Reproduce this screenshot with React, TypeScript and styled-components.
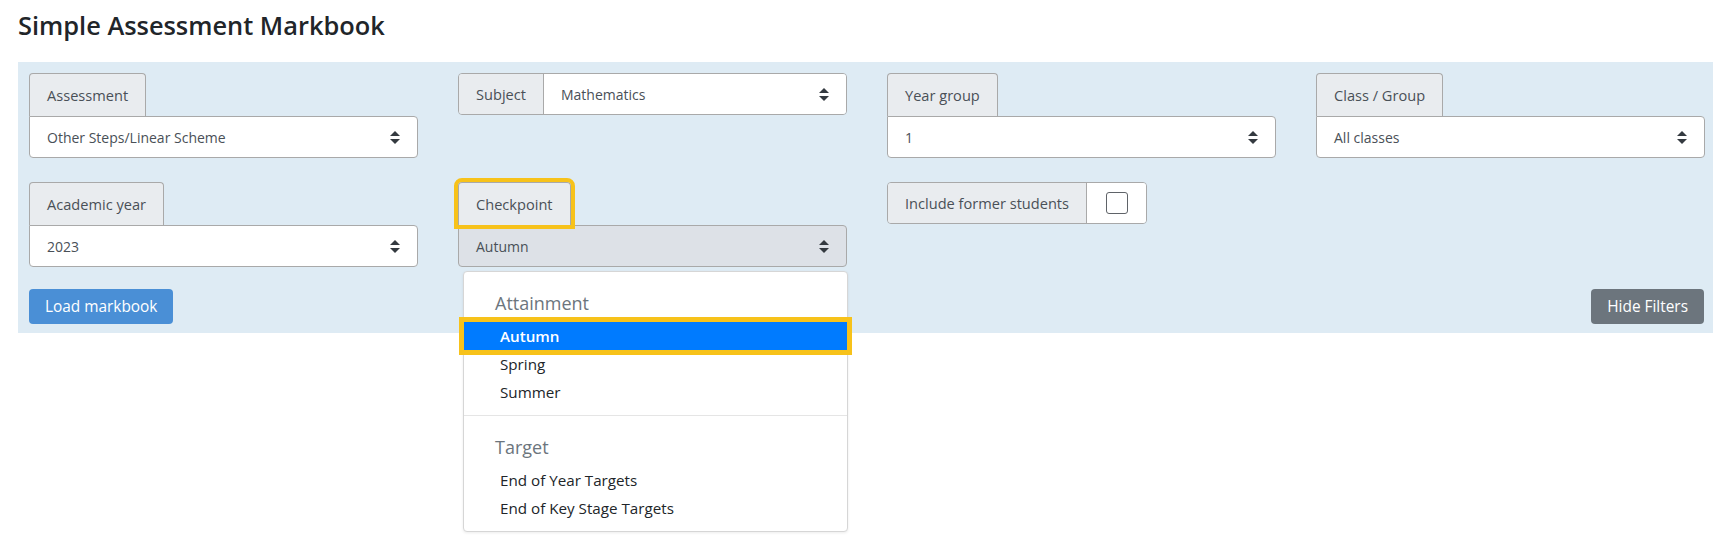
import * as React from "react";
import styled, { createGlobalStyle } from "styled-components";

const GlobalStyle = createGlobalStyle`
  html, body {
    margin: 0;
    padding: 0;
    background: #fff;
    font-family: "Open Sans", "Noto Sans", Arial, sans-serif;
    color: #212529;
  }
`;

const Page = styled.div`
  padding: 4px 23px 0 18px;
  width: 1736px;
  min-height: 551px;
  box-sizing: border-box;
`;

const Title = styled.h1`
  margin: 0 0 16px 0;
  font-size: 25.4px;
  font-weight: 600;
  line-height: 42px;
  color: #212529;
`;

const Panel = styled.div`
  background: #deebf4;
  padding: 11px 9px 9px 11px;
`;

const Grid = styled.div`
  display: grid;
  grid-template-columns: repeat(4, 389px);
  column-gap: 40px;
  row-gap: 24px;
`;

const Field = styled.div`
  position: relative;
  display: flex;
  flex-direction: column;
  align-items: flex-start;
`;

const Label = styled.div<{ $highlight?: boolean }>`
  position: relative;
  z-index: ${(p) => (p.$highlight ? 2 : "auto")};
  display: flex;
  align-items: center;
  height: 43px;
  padding: 0 17px;
  box-sizing: border-box;
  background: #e9ecef;
  border: 1px solid #a9a9a9;
  border-bottom: none;
  border-radius: 4px 4px 0 0;
  font-size: 14.6px;
  color: #495057;
  outline: ${(p) => (p.$highlight ? "4px solid #f7c21a" : "none")};
`;

const Select = styled.div<{ $active?: boolean }>`
  display: flex;
  align-items: center;
  justify-content: space-between;
  width: 100%;
  height: 42px;
  padding: 0 17px 0 17px;
  box-sizing: border-box;
  background: ${(p) => (p.$active ? "#dde1e7" : "#fff")};
  border: 1px solid #a9a9a9;
  border-radius: 0 4px 4px 4px;
  font-size: 14px;
  color: #495057;
`;

const InlineGroup = styled.div`
  display: flex;
  width: 100%;
  height: 42px;
  box-sizing: border-box;
  border: 1px solid #a9a9a9;
  border-radius: 4px;
  overflow: hidden;
  font-size: 14.6px;
  color: #495057;
`;

const InlineLabel = styled.div`
  display: flex;
  align-items: center;
  padding: 0 17px;
  background: #e9ecef;
  border-right: 1px solid #a9a9a9;
`;

const InlineSelect = styled.div`
  flex: 1;
  display: flex;
  align-items: center;
  justify-content: space-between;
  padding: 0 17px 0 17px;
  font-size: 14px;
  background: #fff;
`;

const CheckGroup = styled(InlineGroup)`
  width: auto;
`;

const CheckCell = styled.div`
  width: 59px;
  display: flex;
  align-items: center;
  justify-content: center;
  background: #fff;
`;

const CheckBox = styled.span`
  width: 20px;
  height: 20px;
  border: 1.5px solid #5f6368;
  border-radius: 3px;
  background: #fff;
`;

const Menu = styled.div`
  position: absolute;
  top: 89px;
  left: 5px;
  right: -1px;
  z-index: 5;
  background: #fff;
  border: 1px solid #d6d6d6;
  border-radius: 4px;
  box-shadow: 0 1px 3px rgba(0, 0, 0, 0.08);
  padding: 13px 0 9px;
  font-size: 15.2px;
`;

const MenuHeader = styled.div`
  padding-left: 31px;
  height: 37px;
  line-height: 37px;
  font-size: 18px;
  color: #6c757d;
`;

const MenuItem = styled.div<{ $selected?: boolean }>`
  position: relative;
  height: 28px;
  line-height: 28px;
  padding-left: 36px;
  color: ${(p) => (p.$selected ? "#fff" : "#212529")};
  background: ${(p) => (p.$selected ? "#007bff" : "transparent")};
  font-weight: ${(p) => (p.$selected ? 600 : 400)};
  outline: ${(p) => (p.$selected ? "5px solid #f7c21a" : "none")};
`;

const MenuDivider = styled.div`
  height: 1px;
  background: #e5e5e5;
  margin: 9px 0 13px;
`;

const Actions = styled.div`
  display: flex;
  justify-content: space-between;
  align-items: center;
  margin-top: 22px;
`;

const Button = styled.button<{ $variant: "primary" | "secondary" }>`
  height: 35px;
  padding: 0 16px;
  border: none;
  border-radius: 4px;
  font-family: inherit;
  font-size: 15.4px;
  color: #fff;
  background: ${(p) => (p.$variant === "primary" ? "#4a8fd6" : "#6c757d")};
`;

const Caret = () => (
  <svg width="10" height="13" viewBox="0 0 10 13">
    <path d="M5 0 L10 5 L0 5 Z" fill="#343a40" />
    <path d="M0 8 L10 8 L5 13 Z" fill="#343a40" />
  </svg>
);

const StackedSelect = (props: { label: string; value: string }) => (
  <Field>
    <Label>{props.label}</Label>
    <Select>
      <span>{props.value}</span>
      <Caret />
    </Select>
  </Field>
);

const App = () => {
  return (
    <Page>
      <GlobalStyle />
      <Title>Simple Assessment Markbook</Title>
      <Panel>
        <Grid>
          <StackedSelect label="Assessment" value="Other Steps/Linear Scheme" />
          <Field>
            <InlineGroup>
              <InlineLabel>Subject</InlineLabel>
              <InlineSelect>
                <span>Mathematics</span>
                <Caret />
              </InlineSelect>
            </InlineGroup>
          </Field>
          <StackedSelect label="Year group" value="1" />
          <StackedSelect label="Class / Group" value="All classes" />

          <StackedSelect label="Academic year" value="2023" />
          <Field>
            <Label $highlight>Checkpoint</Label>
            <Select $active>
              <span>Autumn</span>
              <Caret />
            </Select>
            <Menu>
              <MenuHeader>Attainment</MenuHeader>
              <MenuItem $selected>Autumn</MenuItem>
              <MenuItem>Spring</MenuItem>
              <MenuItem>Summer</MenuItem>
              <MenuDivider />
              <MenuHeader>Target</MenuHeader>
              <MenuItem>End of Year Targets</MenuItem>
              <MenuItem>End of Key Stage Targets</MenuItem>
            </Menu>
          </Field>
          <Field>
            <CheckGroup>
              <InlineLabel>Include former students</InlineLabel>
              <CheckCell>
                <CheckBox />
              </CheckCell>
            </CheckGroup>
          </Field>
          <div />
        </Grid>
        <Actions>
          <Button $variant="primary">Load markbook</Button>
          <Button $variant="secondary">Hide Filters</Button>
        </Actions>
      </Panel>
    </Page>
  );
};

export default App;
